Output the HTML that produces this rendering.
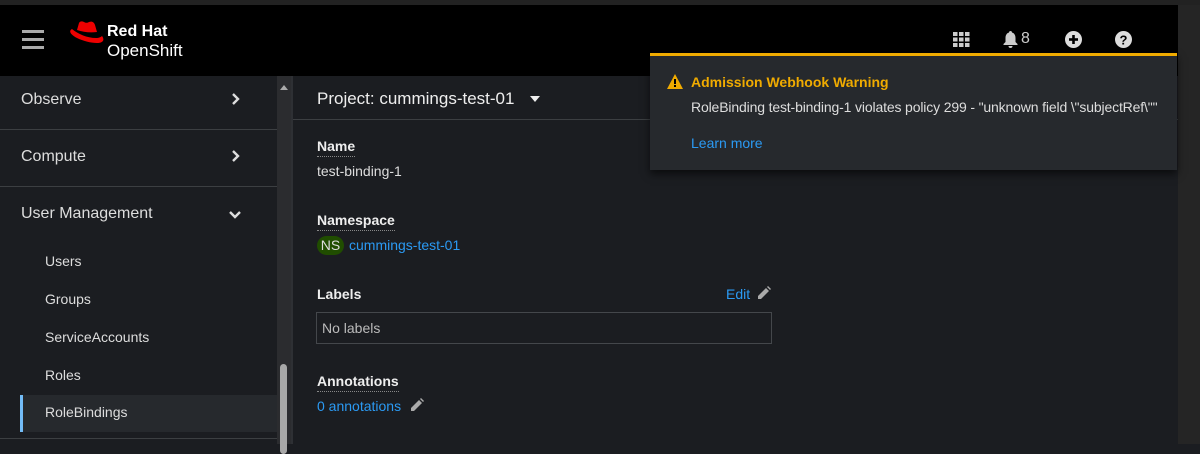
<!DOCTYPE html>
<html><head><style>
*{margin:0;padding:0;box-sizing:border-box}
body{width:1200px;height:444px;overflow:hidden;background:#1b1d21;font-family:"Liberation Sans",sans-serif;color:#e0e0e0;position:relative}
.a{position:absolute}
.top{left:0;top:0;width:1200px;height:5px;background:#222}
.hdr{left:0;top:5px;width:1178px;height:71px;background:#000}
.rstrip{left:1178px;top:5px;width:22px;height:439px;background:#252525}
.side{left:0;top:76px;width:277px;height:368px;background:#1b1d21}
.sb{left:277px;top:76px;width:14px;height:368px;background:#2b2c2f}
.div{left:291px;top:76px;width:2px;height:368px;background:#2e3034}
.nav{position:absolute;left:21px;font-size:16px;color:#ddd}
.sub{position:absolute;left:45px;font-size:14px;color:#ddd}
.sep{position:absolute;left:0;width:277px;height:1px;background:#3c3f42}
.chev{position:absolute;left:230px}
.lbl{position:absolute;left:317px;font-size:14px;font-weight:bold;color:#eee;border-bottom:1px dotted #888;padding-bottom:2px}
.val{position:absolute;left:317px;font-size:14px;color:#ddd}
.link{color:#2b9af3}
</style></head><body>
<div class="a top"></div>
<div class="a hdr"></div>
<div class="a rstrip"></div>
<!-- hamburger -->
<div class="a" style="left:22px;top:30px;width:22px;height:3px;background:#aaa"></div>
<div class="a" style="left:22px;top:38px;width:22px;height:3px;background:#aaa"></div>
<div class="a" style="left:22px;top:46px;width:22px;height:3px;background:#aaa"></div>
<!-- logo -->
<svg class="a" style="left:68px;top:20px" width="36" height="26" viewBox="0 0 36 26">
<path d="M11 3c1-2 3-2 5-1 2 1 3 1 5 0 3-1 5 0 6 3l2 7c-7 1-14 0-20-2z" fill="#e00"/>
<path d="M4 9c-4 2-1 6 5 9 6 3 14 5 20 5 6 0 8-3 5-7-1 1-3 2-6 2-9 0-18-4-24-9z" fill="#e00"/>
</svg>
<div class="a" style="left:107px;top:23px;font-size:16px;font-weight:bold;color:#fff">Red Hat</div>
<div class="a" style="left:107px;top:41px;font-size:17px;color:#fff">OpenShift</div>
<!-- header icons -->
<svg class="a" style="left:953px;top:32px" width="17" height="15" viewBox="0 0 17 15" fill="#ccc">
<rect x="0" y="0" width="4.5" height="4"/><rect x="6" y="0" width="4.5" height="4"/><rect x="12" y="0" width="4.5" height="4"/>
<rect x="0" y="5.5" width="4.5" height="4"/><rect x="6" y="5.5" width="4.5" height="4"/><rect x="12" y="5.5" width="4.5" height="4"/>
<rect x="0" y="11" width="4.5" height="4"/><rect x="6" y="11" width="4.5" height="4"/><rect x="12" y="11" width="4.5" height="4"/>
</svg>
<svg class="a" style="left:1003px;top:31px" width="15" height="17" viewBox="0 0 15 17" fill="#ccc"><path d="M7.5 0c1 0 1.5.7 1.5 1.5 2.5.7 3.5 3 3.5 5.5v4l2 2v1H.5v-1l2-2V7c0-2.5 1-4.8 3.5-5.5C6 .7 6.5 0 7.5 0zM5.5 15h4a2 2 0 0 1-4 0z"/></svg>
<div class="a" style="left:1021px;top:30px;font-size:16px;color:#ccc">8</div>
<svg class="a" style="left:1065px;top:31px" width="17" height="17" viewBox="0 0 17 17"><circle cx="8.5" cy="8.5" r="8.5" fill="#ddd"/><rect x="7.2" y="4" width="2.6" height="9" fill="#000"/><rect x="4" y="7.2" width="9" height="2.6" fill="#000"/></svg>
<svg class="a" style="left:1115px;top:31px" width="17" height="17" viewBox="0 0 17 17"><circle cx="8.5" cy="8.5" r="8.5" fill="#ddd"/><text x="8.5" y="13.5" font-size="13" font-weight="bold" text-anchor="middle" fill="#000" font-family="Liberation Sans">?</text></svg>
<!-- sidebar -->
<div class="a side">
<div class="nav" style="top:15px">Observe</div>
<svg class="chev" style="top:17px" width="10" height="12" viewBox="0 0 10 12"><path d="M3 1l5 5-5 5" stroke="#ddd" stroke-width="2.4" fill="none"/></svg>
<div class="sep" style="top:53px"></div>
<div class="nav" style="top:72px">Compute</div>
<svg class="chev" style="top:74px" width="10" height="12" viewBox="0 0 10 12"><path d="M3 1l5 5-5 5" stroke="#ddd" stroke-width="2.4" fill="none"/></svg>
<div class="sep" style="top:110px"></div>
<div class="nav" style="top:129px">User Management</div>
<svg class="chev" style="top:134px;left:229px" width="12" height="10" viewBox="0 0 12 10"><path d="M1 2l5 5 5-5" stroke="#ddd" stroke-width="2.4" fill="none"/></svg>
<div class="sub" style="top:177px">Users</div>
<div class="sub" style="top:215px">Groups</div>
<div class="sub" style="top:253px">ServiceAccounts</div>
<div class="sub" style="top:291px">Roles</div>
<div style="position:absolute;left:20px;top:319px;width:257px;height:37px;background:#26292d"></div>
<div style="position:absolute;left:20px;top:319px;width:3px;height:37px;background:#73bcf7"></div>
<div class="sub" style="top:328px">RoleBindings</div>
<div class="sep" style="top:362px"></div>
</div>
<div class="a sb"><div style="position:absolute;left:3px;top:9px;width:0;height:0;border-left:4px solid transparent;border-right:4px solid transparent;border-bottom:5px solid #aaa"></div>
<div style="position:absolute;left:3px;top:288px;width:7px;height:90px;border-radius:4px;background:#a8a8a8"></div></div>
<div class="a div"></div>
<!-- main -->
<div class="a" style="left:293px;top:119px;width:885px;height:1px;background:#3c3f42"></div>
<div class="a" style="left:317px;top:89px;font-size:17px;color:#eee">Project: cummings-test-01</div>
<div class="a" style="left:530px;top:96px;width:0;height:0;border-left:5px solid transparent;border-right:5px solid transparent;border-top:6px solid #eee"></div>
<div class="lbl" style="top:138px">Name</div>
<div class="val" style="top:163px">test-binding-1</div>
<div class="lbl" style="top:212px">Namespace</div>
<div class="a" style="left:317px;top:236px;width:27px;height:19px;border-radius:10px;background:#204d00;color:#ddd;font-size:14px;text-align:center;line-height:19px">NS</div>
<div class="val link" style="left:349px;top:237px">cummings-test-01</div>
<div class="lbl" style="top:286px;border:none">Labels</div>
<div class="val link" style="left:726px;top:286px">Edit</div>
<svg class="a" style="left:757px;top:286px" width="14" height="14" viewBox="0 0 14 14" fill="#aaa"><path d="M1 10l8-8 3 3-8 8H1z"/><path d="M10 1l1-1 3 3-1 1z"/></svg>
<div class="a" style="left:316px;top:312px;width:456px;height:32px;border:1px solid #44474b;font-size:14px;color:#bbb;padding:7px 5px">No labels</div>
<div class="lbl" style="top:373px">Annotations</div>
<div class="val link" style="top:398px">0 annotations</div>
<svg class="a" style="left:410px;top:398px" width="14" height="14" viewBox="0 0 14 14" fill="#aaa"><path d="M1 10l8-8 3 3-8 8H1z"/><path d="M10 1l1-1 3 3-1 1z"/></svg>
<!-- toast -->
<div class="a" style="left:650px;top:53px;width:527px;height:117px;background:#26292d;border-top:3px solid #f0ab00;box-shadow:0 4px 8px rgba(0,0,0,.6)"></div>
<svg class="a" style="left:667px;top:74px" width="16" height="15" viewBox="0 0 16 15"><path d="M8 0l8 15H0z" fill="#f0ab00"/><rect x="7" y="5" width="2" height="5" fill="#000"/><rect x="7" y="11" width="2" height="2" fill="#000"/></svg>
<div class="a" style="left:691px;top:74px;font-size:14px;font-weight:bold;color:#f0ab00">Admission Webhook Warning</div>
<div class="a" style="left:691px;top:99px;font-size:14px;color:#ddd;letter-spacing:-0.15px">RoleBinding test-binding-1 violates policy 299 - "unknown field \"subjectRef\""</div>
<div class="a link" style="left:691px;top:135px;font-size:14px">Learn more</div>
</body></html>
